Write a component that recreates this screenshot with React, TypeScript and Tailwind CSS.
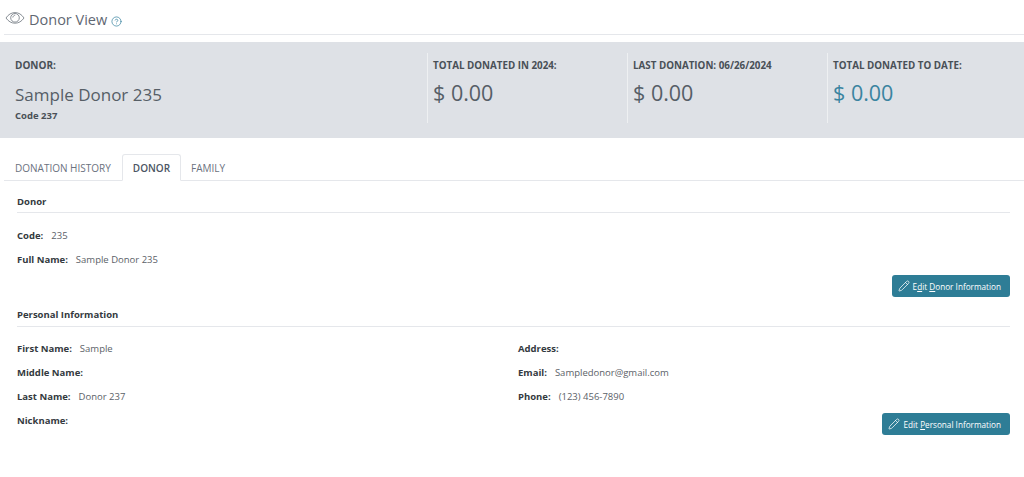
import { HelpCircle, Pencil } from 'lucide-react';

const font = { fontFamily: '"Open Sans", sans-serif' };

function Field({ label, value }: { label: string; value?: string }) {
  return (
    <div className="flex h-6 items-center pt-[2px] text-[9.500px] text-[#5b6168]">
      <span className="mr-2 font-bold text-[#343a40]">{label}</span>
      {value && <span>{value}</span>}
    </div>
  );
}

function Stat({ label, value, accent, last }: { label: string; value: string; accent?: boolean; last?: boolean }) {
  return (
    <div className={`h-[70px] border-l border-l-[#eef0f2] pt-[6px] pl-[5px] ${last ? 'flex-1' : 'w-[200px]'}`}>
      <div className="text-[9.800px] leading-[14px] font-bold text-[#495057]">{label}</div>
      <div className={`mt-[4px] text-[21.500px] leading-[32px] ${accent ? 'text-[#3a84a0]' : 'text-[#565e66]'}`}>{value}</div>
    </div>
  );
}

function EditButton({ children }: { children: React.ReactNode }) {
  return (
    <button className="flex h-[22px] items-center gap-[3px] rounded-[3px] bg-[#2e7d96] pr-[9px] pl-[6px] text-[8.200px] text-white">
      <Pencil size={12} strokeWidth={1.5} />
      <span className="pt-[2px]">{children}</span>
    </button>
  );
}

function SectionTitle({ children, tall }: { children: React.ReactNode; tall?: boolean }) {
  return (
    <div className={`mr-[14px] ml-[17px] border-b border-b-[#e5e7eb] pt-[1px] text-[9.500px] leading-[14px] font-bold text-[#343a40] ${tall ? 'h-[20px]' : 'h-[19px]'}`}>
      {children}
    </div>
  );
}

export default function App() {
  return (
    <div className="h-[477px] overflow-hidden bg-white" style={font}>
      <div className="ml-[4px] flex h-[35px] items-center border-b border-b-[#e5e7eb] pt-[6px]">
        <svg width="20" height="14" viewBox="0 0 20 14" fill="none" stroke="#7d838b" strokeWidth="0.9" className="mr-[4px] mb-[4px] ml-[1px]">
          <path d="M1 7c2.4-3.6 5.4-5.4 9-5.4s6.6 1.8 9 5.4c-2.4 3.4-5.4 5.2-9 5.2S3.4 10.400 1 7z" />
          <circle cx="10" cy="6.800" r="4.300" />
          <path d="M7.800 6.500c.2-1.300 1.100-2.200 2.400-2.300" />
        </svg>
        <span className="text-[14.500px] text-[#5f6772]">Donor View</span>
        <HelpCircle size={11} strokeWidth={1.6} className="mt-[2px] ml-[4px] text-[#3a84a0]" />
      </div>

      <div className="mt-[7px] flex h-[96px] items-start bg-[#dee1e6]">
        <div className="w-[427px] shrink-0 pt-[16px] pl-[15px]">
          <div className="text-[10px] leading-[14px] font-bold text-[#495057]">DONOR:</div>
          <div className="mt-[10px] text-[17px] leading-[25px] text-[#565e66]">Sample Donor 235</div>
          <div className="mt-[2px] text-[9.500px] leading-[14px] font-bold text-[#495057]">Code 237</div>
        </div>
        <div className="mt-[11px] flex flex-1">
          <Stat label="TOTAL DONATED IN 2024:" value="$ 0.00" />
          <Stat label="LAST DONATION: 06/26/2024" value="$ 0.00" />
          <Stat label="TOTAL DONATED TO DATE:" value="$ 0.00" accent last />
        </div>
      </div>

      <div className="mt-[16px] ml-[4px] flex h-[27px] items-end border-b border-b-[#e5e7eb] text-[10px] text-[#6b7280]">
        <div className="flex h-[26px] items-center px-[11px] pt-[2px]">DONATION HISTORY</div>
        <div className="mb-[-1px] flex h-[27px] items-center rounded-t-[3px] border border-[#e5e7eb] border-b-white bg-white px-[10px] pt-[2px] font-semibold text-[#4b5563]">
          DONOR
        </div>
        <div className="flex h-[26px] items-center px-[10px] pt-[2px]">FAMILY</div>
      </div>

      <div className="pt-[13px]">
        <SectionTitle>Donor</SectionTitle>
        <div className="mt-[10px] ml-[17px]">
          <Field label="Code:" value="235" />
          <Field label="Full Name:" value="Sample Donor 235" />
        </div>
        <div className="mt-[4px] mr-[14px] flex justify-end">
          <EditButton>
            E<u>d</u>it <u>D</u>onor Information
          </EditButton>
        </div>

        <div className="mt-[10px]">
          <SectionTitle tall>Personal Information</SectionTitle>
        </div>
        <div className="mt-[9px] ml-[17px] grid grid-cols-[501px_1fr]">
          <div>
            <Field label="First Name:" value="Sample" />
            <Field label="Middle Name:" />
            <Field label="Last Name:" value="Donor 237" />
            <Field label="Nickname:" />
          </div>
          <div>
            <Field label="Address:" />
            <Field label="Email:" value="Sampledonor@gmail.com" />
            <Field label="Phone:" value="(123) 456-7890" />
            <div className="mt-[5px] mr-[14px] flex justify-end">
              <EditButton>
                Edit <u>P</u>ersonal Information
              </EditButton>
            </div>
          </div>
        </div>
      </div>
    </div>
  );
}
